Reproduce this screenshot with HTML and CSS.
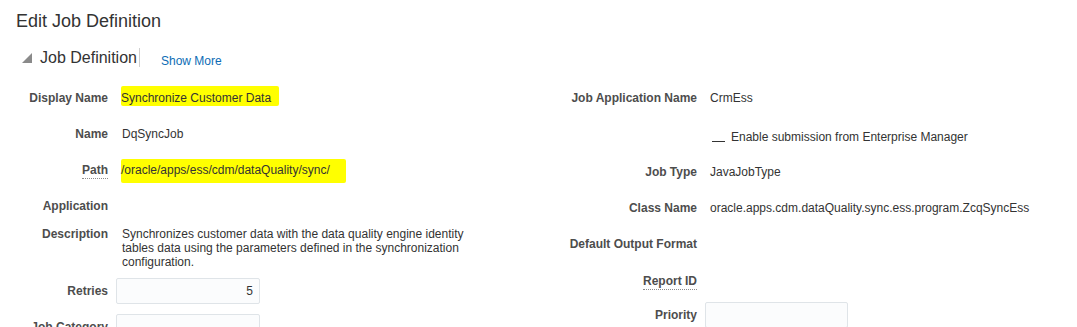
FILE: index.html
```html
<!DOCTYPE html>
<html>
<head>
<meta charset="utf-8">
<link rel="stylesheet" href="styles.css">
</head>
<body>
<h1 class="page-title">Edit Job Definition</h1>
<div class="section-header">
  <svg class="disclose" width="10" height="10" viewBox="0 0 10 10"><polygon points="0,10 10,0 10,10" fill="#8a8a8a"/></svg>
  <span class="section-title">Job Definition</span>
  <span class="divider"></span>
  <a class="show-more">Show More</a>
</div>
<div class="form">
  <div class="col col-left">
    <div class="row"><div class="label">Display Name</div><div class="value"><span class="hl hl-name">Synchronize Customer Data</span></div></div>
    <div class="row"><div class="label">Name</div><div class="value">DqSyncJob</div></div>
    <div class="row"><div class="label"><span class="dotted">Path</span></div><div class="value"><span class="hl hl-path">/oracle/apps/ess/cdm/dataQuality/sync/</span></div></div>
    <div class="row"><div class="label">Application</div><div class="value"></div></div>
    <div class="row row-top"><div class="label">Description</div><div class="value desc">Synchronizes customer data with the data quality engine identity tables data using the parameters defined in the synchronization configuration.</div></div>
    <div class="row"><div class="label">Retries</div><div class="field"><div class="input num">5</div></div></div>
    <div class="row"><div class="label">Job Category</div><div class="field"><div class="input"></div></div></div>
  </div>
  <div class="col col-right">
    <div class="row"><div class="label">Job Application Name</div><div class="value">CrmEss</div></div>
    <div class="row row-check"><div class="label"></div><div class="value"><span class="check"></span>Enable submission from Enterprise Manager</div></div>
    <div class="row"><div class="label">Job Type</div><div class="value">JavaJobType</div></div>
    <div class="row"><div class="label">Class Name</div><div class="value">oracle.apps.cdm.dataQuality.sync.ess.program.ZcqSyncEss</div></div>
    <div class="row"><div class="label">Default Output Format</div><div class="value"></div></div>
    <div class="row"><div class="label"><span class="dotted">Report ID</span></div><div class="value"></div></div>
    <div class="row row-last"><div class="label">Priority</div><div class="field"><div class="input"></div></div></div>
  </div>
</div>
</body>
</html>
```
FILE: styles.css
```css
html, body {
  margin: 0;
  padding: 0;
  background: #ffffff;
  font-family: "Liberation Sans", Arial, sans-serif;
  color: #333333;
  overflow: hidden;
}
.page-title {
  margin: 10px 0 0 16px;
  font-size: 18px;
  line-height: 22px;
  font-weight: normal;
  color: #333333;
}
.section-header {
  display: flex;
  align-items: flex-end;
  margin-top: 16px;
  padding-left: 22px;
  height: 20px;
}
.disclose {
  align-self: center;
  margin-right: 8px;
}
.section-title {
  font-size: 16px;
  line-height: 20px;
  color: #333333;
}
.divider {
  width: 1px;
  height: 19px;
  background: #cfcfcf;
  margin-left: 2px;
  align-self: flex-start;
}
.show-more {
  margin-left: 21px;
  font-size: 12px;
  line-height: 14px;
  color: #0d6cb5;
}
.form {
  display: flex;
  margin-top: 12px;
  padding-left: 16px;
}
.col {
  display: flex;
  flex-direction: column;
}
.col-left { width: 524px; }
.row {
  display: flex;
  align-items: center;
  padding: 4px 0;
  min-height: 28px;
  font-size: 12px;
}
.col-right .row { padding-bottom: 4.35px; }
.col-right .row:first-child { padding-bottom: 5px; }
.col-right .row-check { padding-top: 5.5px; padding-bottom: 3px; }
.col-right .row-last { padding-top: 2.5px; }
.row-top { align-items: flex-start; padding-top: 3px; }
.row-top .label, .row-top .value { line-height: 14px; }
.label {
  flex: none;
  text-align: right;
  font-weight: bold;
  color: #4d4d4d;
  margin-right: 8px;
}
.col-left .label { width: 92px; }
.col-right .label { width: 157px; }
.value {
  padding-left: 6px;
  color: #333333;
  display: block;
}
.col-right .value { padding-left: 5px; }
.desc { width: 350px; }
.dotted {
  border-bottom: 1px dotted #8c8c8c;
  padding-bottom: 1px;
}
.hl {
  background: #ffff00;
  padding: 5px 8px 1px 0;
  margin-left: -1px;
  border-radius: 2px;
}
.hl-path {
  padding: 4px 16px 6px 0;
}
.input {
  height: 24px;
  border: 1px solid #dfe4e8;
  border-radius: 2px;
  background: #fbfcfd;
  box-sizing: content-box;
  font-size: 12px;
  line-height: 24px;
  padding: 0 6px;
  color: #333333;
}
.col-left .input { width: 130px; }
.col-right .input { width: 129px; }
.num { text-align: right; }
.check {
  display: inline-block;
  width: 13px;
  height: 10px;
  border-bottom: 1px solid #333333;
  margin-left: 2px;
  margin-right: 6px;
  vertical-align: -1px;
}
```
